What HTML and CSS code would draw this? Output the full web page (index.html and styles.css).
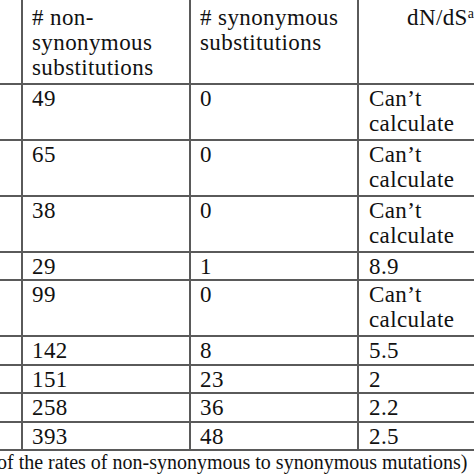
FILE: index.html
```html
<!DOCTYPE html>
<html>
<head>
<meta charset="utf-8">
<link rel="stylesheet" href="styles.css">
</head>
<body>
<div class="page">
  <div class="table">
    <div class="row head">
      <div class="cell"></div>
      <div class="cell">#&nbsp;non-<br>synonymous<br>substitutions</div>
      <div class="cell"># synonymous<br>substitutions</div>
      <div class="cell center">dN/dS<sup>a</sup></div>
    </div>
    <div class="row h56"><div class="cell"></div><div class="cell">49</div><div class="cell">0</div><div class="cell last">Can’t<br>calculate</div></div>
    <div class="row h56"><div class="cell"></div><div class="cell">65</div><div class="cell">0</div><div class="cell last">Can’t<br>calculate</div></div>
    <div class="row h56"><div class="cell"></div><div class="cell">38</div><div class="cell">0</div><div class="cell last">Can’t<br>calculate</div></div>
    <div class="row h28"><div class="cell"></div><div class="cell">29</div><div class="cell">1</div><div class="cell last">8.9</div></div>
    <div class="row h56"><div class="cell"></div><div class="cell">99</div><div class="cell">0</div><div class="cell last">Can’t<br>calculate</div></div>
    <div class="row h29"><div class="cell"></div><div class="cell">142</div><div class="cell">8</div><div class="cell last">5.5</div></div>
    <div class="row h28"><div class="cell"></div><div class="cell">151</div><div class="cell">23</div><div class="cell last">2</div></div>
    <div class="row h29"><div class="cell"></div><div class="cell">258</div><div class="cell">36</div><div class="cell last">2.2</div></div>
    <div class="row h30 end"><div class="cell"></div><div class="cell">393</div><div class="cell">48</div><div class="cell last">2.5</div></div>
  </div>
  <p class="caption">of the rates of non-synonymous to synonymous mutations)</p>
</div>
</body>
</html>
```
FILE: styles.css
```css
html, body {
  margin: 0;
  padding: 0;
  background: #fff;
  overflow: hidden;
}
.page {
  width: 474px;
  height: 474px;
  overflow: hidden;
  font-family: "Liberation Serif", "Times New Roman", serif;
  font-size: 23px;
  letter-spacing: 0.4px;
  line-height: 25px;
  color: #111;
}
.table {
  width: 522px;
}
.row {
  display: grid;
  grid-template-columns: 21px 168px 168px 165px;
  box-sizing: border-box;
  border-top: 2px solid #5a5a5a;
}
.row.head {
  height: 83px;
  border-top: none;
}
.row.h56 { height: 56px; }
.row.h28 { height: 28px; }
.row.h29 { height: 29px; }
.row.h30 { height: 30px; }
.row.end { border-bottom: 2px solid #5a5a5a; }
.cell {
  box-sizing: border-box;
  padding: 1px 0 0 9px;
  white-space: nowrap;
}
.head .cell { padding-top: 5px; }
.cell + .cell { border-left: 2px solid #5a5a5a; }
.cell:first-child { padding: 0; }
.cell.last { padding-left: 10px; }
.cell.center { text-align: center; padding-left: 0; }
sup {
  font-size: 14px;
  line-height: 0;
  vertical-align: 0;
  position: relative;
  top: -7px;
  letter-spacing: 0;
}
.caption {
  margin: 0 0 0 -3px;
  font-size: 20px;
  letter-spacing: 0;
  line-height: 14px;
  padding-top: 4px;
  white-space: nowrap;
}
```
